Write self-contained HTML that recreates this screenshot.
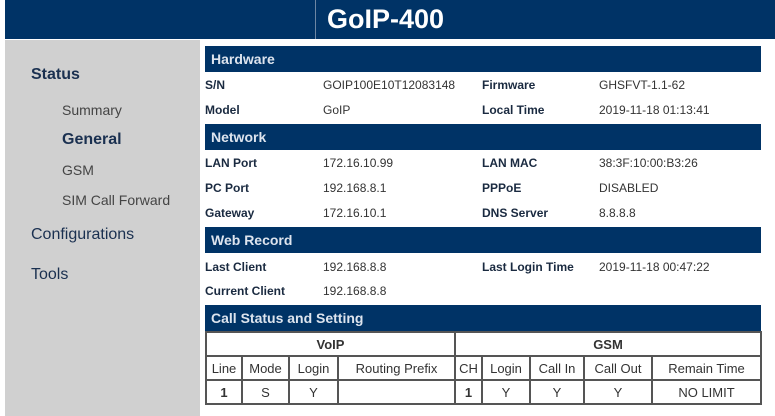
<!DOCTYPE html><html><head><style>
body{margin:0;width:775px;height:416px;background:#fff;font-family:"Liberation Sans",Arial,sans-serif;position:relative;overflow:hidden}
.a{position:absolute}
#hd{left:5px;top:0;width:770px;height:39px;background:#003366}
#dv{left:315px;top:0;width:1px;height:39px;background:#6d86a3}
#tt{left:327px;top:4px;color:#fff;font-weight:bold;font-size:27px}
#sb{left:5px;top:40px;width:195px;height:376px;background:#d0d0d0}
.s{color:#1a3050;font-size:16px}
.sm{color:#444;font-size:14px}
.bar{left:205px;width:556px;height:26px;background:#003366;color:#dde4ee;font-weight:bold;font-size:14px;line-height:26px;text-indent:6px}
.l{font-weight:bold;font-size:12px;color:#1a2a40}
.v{font-size:12px;color:#333}
table{position:absolute;left:205px;top:331px;width:557px;border-collapse:collapse;font-size:13px;color:#333}
td{border:2px solid #555;height:22px;text-align:center;padding:0}
</style></head><body>
<div class="a" id="hd"></div><div class="a" id="dv"></div><div class="a" id="tt">GoIP-400</div>
<div class="a" id="sb"></div>
<div class="a s" style="left:31px;top:66px;font-weight:bold">Status</div>
<div class="a sm" style="left:62px;top:102px">Summary</div>
<div class="a s" style="left:62px;top:131px;font-weight:bold">General</div>
<div class="a sm" style="left:62px;top:162px">GSM</div>
<div class="a sm" style="left:62px;top:192px">SIM Call Forward</div>
<div class="a s" style="left:31px;top:226px">Configurations</div>
<div class="a s" style="left:31px;top:266px">Tools</div>

<div class="a bar" style="top:46px">Hardware</div>
<div class="a l" style="left:205px;top:78px">S/N</div><div class="a v" style="left:323px;top:78px">GOIP100E10T12083148</div>
<div class="a l" style="left:482px;top:78px">Firmware</div><div class="a v" style="left:599px;top:78px">GHSFVT-1.1-62</div>
<div class="a l" style="left:205px;top:103px">Model</div><div class="a v" style="left:323px;top:103px">GoIP</div>
<div class="a l" style="left:482px;top:103px">Local Time</div><div class="a v" style="left:599px;top:103px">2019-11-18 01:13:41</div>

<div class="a bar" style="top:124px">Network</div>
<div class="a l" style="left:205px;top:156px">LAN Port</div><div class="a v" style="left:323px;top:156px">172.16.10.99</div>
<div class="a l" style="left:482px;top:156px">LAN MAC</div><div class="a v" style="left:599px;top:156px">38:3F:10:00:B3:26</div>
<div class="a l" style="left:205px;top:181px">PC Port</div><div class="a v" style="left:323px;top:181px">192.168.8.1</div>
<div class="a l" style="left:482px;top:181px">PPPoE</div><div class="a v" style="left:599px;top:181px">DISABLED</div>
<div class="a l" style="left:205px;top:206px">Gateway</div><div class="a v" style="left:323px;top:206px">172.16.10.1</div>
<div class="a l" style="left:482px;top:206px">DNS Server</div><div class="a v" style="left:599px;top:206px">8.8.8.8</div>

<div class="a bar" style="top:227px">Web Record</div>
<div class="a l" style="left:205px;top:260px">Last Client</div><div class="a v" style="left:323px;top:260px">192.168.8.8</div>
<div class="a l" style="left:482px;top:260px">Last Login Time</div><div class="a v" style="left:599px;top:260px">2019-11-18 00:47:22</div>
<div class="a l" style="left:205px;top:284px">Current Client</div><div class="a v" style="left:323px;top:284px">192.168.8.8</div>

<div class="a bar" style="top:305px">Call Status and Setting</div>
<table>
<tr><td colspan="4" style="font-weight:bold">VoIP</td><td colspan="5" style="font-weight:bold">GSM</td></tr>
<tr><td style="width:34px">Line</td><td style="width:45px">Mode</td><td style="width:47px">Login</td><td style="width:115px">Routing Prefix</td><td style="width:25px">CH</td><td style="width:46px">Login</td><td style="width:52px">Call In</td><td style="width:66px">Call Out</td><td>Remain Time</td></tr>
<tr><td style="font-weight:bold">1</td><td>S</td><td>Y</td><td></td><td style="font-weight:bold">1</td><td>Y</td><td>Y</td><td>Y</td><td>NO LIMIT</td></tr>
</table>
</body></html>
